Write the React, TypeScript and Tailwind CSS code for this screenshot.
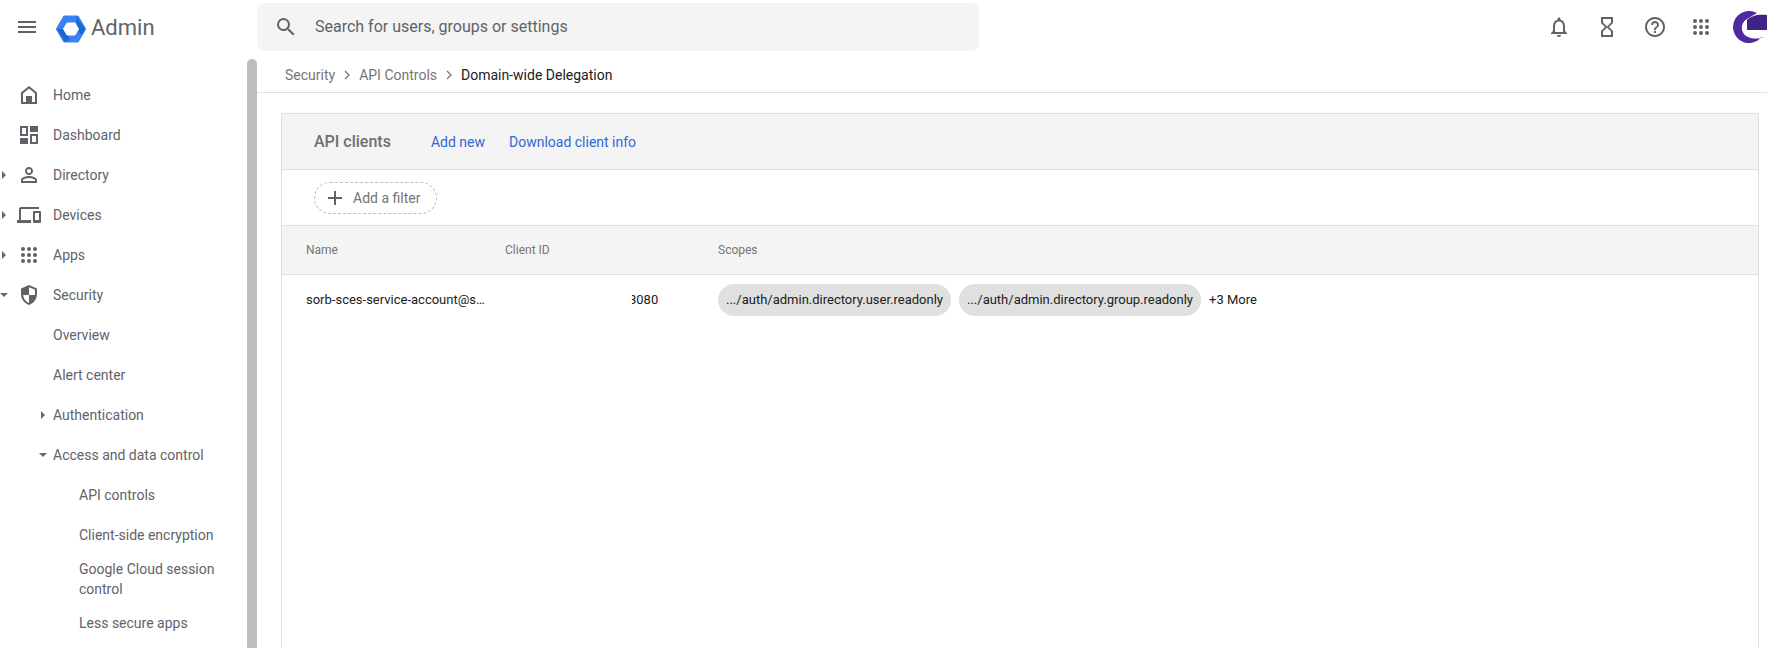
import type { ReactNode } from 'react';

const iconPaths: Record<string, string> = {
  devices:
    'M4 6h18V4H4c-1.1 0-2 .9-2 2v11H0v3h14v-3H4V6zm19 2h-6c-.55 0-1 .45-1 1v10c0 .55.45 1 1 1h6c.55 0 1-.45 1-1V9c0-.55-.45-1-1-1zm-1 9h-4v-7h4v7z',
  person:
    'M12 5.9c1.16 0 2.1.94 2.1 2.1s-.94 2.1-2.1 2.1S9.9 9.16 9.9 8s.94-2.1 2.1-2.1m0 9c2.97 0 6.1 1.46 6.1 2.1v1.1H5.9V17c0-.64 3.13-2.1 6.1-2.1M12 4C9.79 4 8 5.79 8 8s1.79 4 4 4 4-1.79 4-4-1.79-4-4-4zm0 9c-2.67 0-8 1.34-8 4v3h16v-3c0-2.66-5.33-4-8-4z',
  bell:
    'M12 22c1.1 0 2-.9 2-2h-4c0 1.1.9 2 2 2zm6-6v-5c0-3.07-1.63-5.64-4.5-6.32V4c0-.83-.67-1.5-1.5-1.5s-1.5.67-1.5 1.5v.68C7.64 5.36 6 7.92 6 11v5l-2 2v1h16v-1l-2-2zm-2 1H8v-6c0-2.48 1.51-4.5 4-4.5s4 2.02 4 4.5v6z',
  hourglass:
    'M6 2v6h.01L6 8.01 10 12l-4 4 .01.01H6V22h12v-5.99h-.01L18 16l-4-4 4-3.99-.01-.01H18V2H6zm10 14.5V20H8v-3.5l4-4 4 4zm-4-5l-4-4V4h8v3.5l-4 4z',
  help:
    'M11 18h2v-2h-2v2zm1-16C6.48 2 2 6.48 2 12s4.48 10 10 10 10-4.48 10-10S17.52 2 12 2zm0 18c-4.41 0-8-3.59-8-8s3.59-8 8-8 8 3.59 8 8-3.59 8-8 8zm0-14c-2.21 0-4 1.79-4 4h2c0-1.1.9-2 2-2s2 .9 2 2c0 2-3 1.75-3 5h2c0-2.25 3-2.5 3-5 0-2.21-1.79-4-4-4z',
  search:
    'M15.5 14h-.79l-.28-.27A6.471 6.471 0 0 0 16 9.5 6.5 6.5 0 1 0 9.5 16c1.61 0 3.09-.59 4.23-1.57l.27.28v.79l5 4.99L20.49 19l-4.99-5zm-6 0C7.01 14 5 11.99 5 9.5S7.01 5 9.5 5 14 7.01 14 9.5 11.99 14 9.5 14z',
  menu: 'M3 18h18v-2H3v2zm0-5h18v-2H3v2zm0-7v2h18V6H3z',
  add: 'M19 13h-6v6h-2v-6H5v-2h6V5h2v6h6v2z',
  home: 'M12 3 4 9.5V21h16V9.5L12 3zm0 2.6 6 4.9V19h-3v-6H9v6H6v-8.5l6-4.9z',
  dashboard:
    'M3 3h8v10H3V3zm2 2v6h4V5H5zm8-2h8v6h-8V3zM3 15h8v6H3v-6zm10-4h8v10h-8V11zm2 2v6h4v-6h-4z',
  shield:
    'M12 2 4 5.5v5.6c0 5 3.4 9.6 8 10.9 4.6-1.3 8-5.9 8-10.9V5.5L12 2zm0 10V4.2l6 2.6v4.3c0 .3 0 .6-.1.9H12zm0 0v7.9c-3.2-1.1-5.5-4.2-5.9-7.9H12z',
};

function Icon({ name, className = 'h-6 w-6' }: { name: string; className?: string }) {
  return (
    <svg viewBox="0 0 24 24" className={`${className} fill-[#5f6368]`} fillRule="evenodd">
      <path d={iconPaths[name]} />
    </svg>
  );
}

function Dots() {
  const spots = [6, 12, 18];
  return (
    <svg viewBox="0 0 24 24" className="h-6 w-6 fill-[#5f6368]">
      {spots.map((y) => spots.map((x) => <circle key={`${x}-${y}`} cx={x} cy={y} r="2" />))}
    </svg>
  );
}

function Caret({ open }: { open?: boolean }) {
  return (
    <svg viewBox="0 0 10 10" className="h-2.5 w-2.5 fill-[#546e7a]">
      <path d={open ? 'M0 3h8L4 7z' : 'M2 1v8l4-4z'} />
    </svg>
  );
}

function Chevron() {
  return (
    <svg viewBox="0 0 24 16" className="h-4 w-6 fill-none stroke-[#757575] stroke-[1.2]">
      <path d="M10 4l4 4-4 4" />
    </svg>
  );
}

function Logo() {
  return (
    <svg viewBox="0 0 30 28" className="h-7 w-[30px]">
      <path d="M8.5 2h13L28.5 14l-7 12h-13L1.5 14z" fill="#3b82f0" stroke="#3b82f0" strokeWidth="3" strokeLinejoin="round" />
      <path d="M20 1l9 13-3.5 6L21 14z" fill="#1a67d2" />
      <path d="M1 14l4 6.5 4 6.5 5-2-5-11z" fill="#1a67d2" />
      <path d="M11 8h8l3.5 6-3.5 6h-8l-3.5-6z" fill="#fff" stroke="#fff" strokeLinejoin="round" />
    </svg>
  );
}

function Avatar() {
  return (
    <svg viewBox="0 0 34 32" className="h-8 w-[34px] shrink-0">
      <path d="M24 2.1A16 16 0 1 0 28 26.6L31 26C26 28 20 28 15 26 8 23 6 13 14 8z" fill="#4e2a9f" />
      <path d="M14 9C18 5 24 3 34 4V19H14z" fill="#3f2387" />
    </svg>
  );
}

function TopNavRow({ icon, caret, children }: { icon: ReactNode; caret?: 'open' | 'closed'; children: ReactNode }) {
  return (
    <div className="flex h-10 items-center">
      <div className="flex w-[17px] justify-start">
        {caret && <Caret open={caret === 'open'} />}
      </div>
      <div className="flex w-6 justify-center">{icon}</div>
      <span className="ml-3">{children}</span>
    </div>
  );
}

function SubRow({ children, caret }: { children: ReactNode; caret?: 'open' | 'closed' }) {
  return (
    <div className="flex h-10 items-center pl-[39px]">
      <div className="w-3.5">{caret && <Caret open={caret === 'open'} />}</div>
      <span>{children}</span>
    </div>
  );
}

function Sidebar() {
  return (
    <nav className="w-[247px] shrink-0 pt-4 text-sm text-[#5f6368]">
      <TopNavRow icon={<Icon name="home" />}>Home</TopNavRow>
      <TopNavRow icon={<Icon name="dashboard" />}>Dashboard</TopNavRow>
      <TopNavRow icon={<Icon name="person" />} caret="closed">Directory</TopNavRow>
      <TopNavRow icon={<Icon name="devices" />} caret="closed">Devices</TopNavRow>
      <TopNavRow icon={<Dots />} caret="closed">Apps</TopNavRow>
      <TopNavRow icon={<Icon name="shield" />} caret="open">Security</TopNavRow>
      <SubRow>Overview</SubRow>
      <SubRow>Alert center</SubRow>
      <SubRow caret="closed">Authentication</SubRow>
      <SubRow caret="open">Access and data control</SubRow>
      <div className="flex h-10 items-center pl-[79px]">API controls</div>
      <div className="flex h-10 items-center pl-[79px]">Client-side encryption</div>
      <div className="flex h-12 items-center pl-[79px]">
        <span className="w-40 leading-5">Google Cloud session control</span>
      </div>
      <div className="flex h-10 items-center pl-[79px]">Less secure apps</div>
    </nav>
  );
}

function Chip({ children }: { children: ReactNode }) {
  return (
    <span className="flex h-8 items-center rounded-2xl bg-[#e0e0e0] px-2 text-[13px] text-[#212121]">{children}</span>
  );
}

export default function App() {
  return (
    <div className="flex h-screen flex-col overflow-hidden bg-white font-['Roboto',sans-serif]">
      <header className="flex h-[59px] shrink-0 items-start">
        <div className="flex w-[257px] shrink-0 items-start pt-[14px]">
          <div className="ml-[15px] mt-px flex w-[41px]">
            <Icon name="menu" />
          </div>
          <div className="mt-px">
            <Logo />
          </div>
          <span className="ml-[5px] text-[22px] leading-7 text-[#5f6368]">Admin</span>
        </div>
        <div className="mt-[3px] flex h-12 w-[722px] items-center rounded-lg bg-[#f4f4f4] pl-[17px] text-base text-[#5f6368]">
          <Icon name="search" />
          <span className="ml-[17px]">Search for users, groups or settings</span>
        </div>
        <div className="ml-auto flex items-center gap-6 pt-[15px]">
          <Icon name="bell" />
          <Icon name="hourglass" />
          <Icon name="help" />
          <div className="-ml-0.5">
            <Dots />
          </div>
        </div>
        <div className="ml-5 pt-[11px]">
          <Avatar />
        </div>
      </header>

      <div className="flex min-h-0 flex-1">
        <Sidebar />
        <div className="w-2.5 shrink-0 rounded-t-md bg-[#bdbdbd]" />

        <main className="flex min-w-0 flex-1 flex-col">
          <div className="flex h-[34px] shrink-0 items-center border-b border-[#e0e0e0] pb-px pl-[28px] text-sm text-[#757575]">
            <span>Security</span>
            <Chevron />
            <span>API Controls</span>
            <Chevron />
            <span className="text-[#202124]">Domain-wide Delegation</span>
          </div>

          <section className="ml-6 mr-2 mt-5 flex-1 border border-b-0 border-[#e0e0e0]">
            <div className="flex h-14 items-center gap-6 border-b border-[#e0e0e0] bg-[#f4f4f4] pl-8 text-sm">
              <h2 className="mr-4 text-base font-medium text-[#6f6f6f]">API clients</h2>
              <a href="#" className="text-[#3367d6]">Add new</a>
              <a href="#" className="text-[#3367d6]">Download client info</a>
            </div>

            <div className="flex h-14 items-center border-b border-[#e0e0e0] pl-8">
              <div className="flex h-8 w-[123px] items-center rounded-2xl border border-dashed border-[#bdbdbd] pl-2 text-sm text-[#757575]">
                <Icon name="add" />
                <span className="ml-1.5">Add a filter</span>
              </div>
            </div>

            <div className="grid h-[49px] grid-cols-[199px_213px_1fr] items-center border-b border-[#e0e0e0] bg-[#f4f4f4] pl-6 text-xs text-[#757575]">
              <span>Name</span>
              <span>Client ID</span>
              <span>Scopes</span>
            </div>

            <div className="grid h-[49px] grid-cols-[199px_213px_1fr] items-center pl-6 text-[13px] text-[#212121]">
              <span>sorb-sces-service-account@s…</span>
              <div className="ml-[124px]">
                <span className="relative">
                  3080
                  <span className="absolute inset-y-0 left-0 w-[3px] bg-white" />
                </span>
              </div>
              <div className="flex items-center gap-2">
                <Chip>.../auth/admin.directory.user.readonly</Chip>
                <Chip>.../auth/admin.directory.group.readonly</Chip>
                <span>+3 More</span>
              </div>
            </div>
          </section>
        </main>
      </div>
    </div>
  );
}
